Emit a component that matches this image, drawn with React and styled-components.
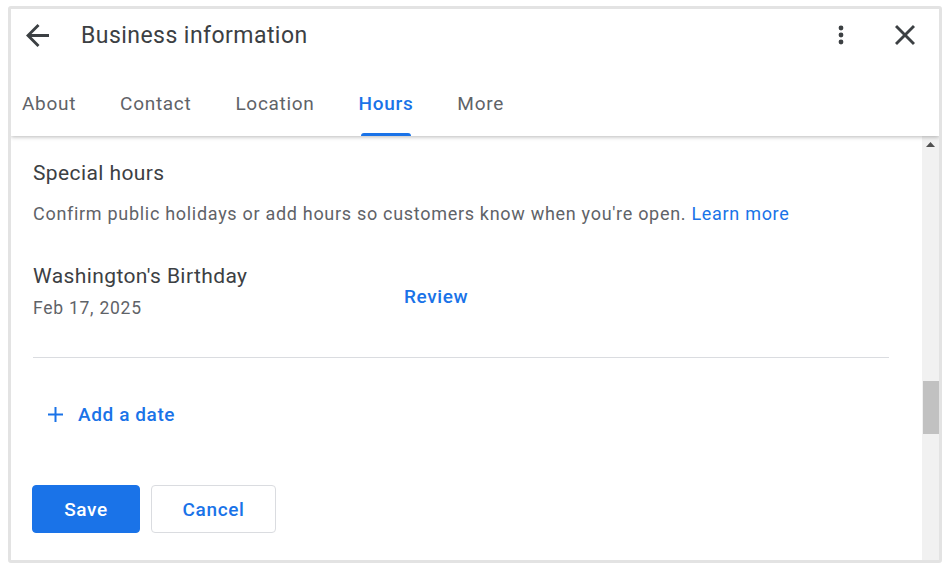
import React from "react";
import styled, { createGlobalStyle } from "styled-components";

const GlobalStyle = createGlobalStyle`
  html, body {
    margin: 0;
    padding: 0;
    background: #ffffff;
  }
  body {
    font-family: Roboto, "Liberation Sans", sans-serif;
  }
  * {
    box-sizing: border-box;
  }
`;

const Page = styled.div`
  padding: 6px 8px 0 8px;
`;

const Frame = styled.div`
  width: 934px;
  height: 557px;
  border: 3px solid #e3e3e3;
  border-radius: 3px;
  display: flex;
  flex-direction: column;
  overflow: hidden;
  background: #fff;
`;

const Header = styled.div`
  height: 127px;
  flex-shrink: 0;
  background: #fff;
  box-shadow: 0 1px 4px rgba(0, 0, 0, 0.28);
  position: relative;
  z-index: 2;
  display: flex;
  flex-direction: column;
`;

const TitleRow = styled.div`
  height: 52px;
  display: flex;
  align-items: center;
  padding: 0 22px 0 14px;
`;

const IconButton = styled.button`
  background: transparent;
  border: 0;
  padding: 0;
  width: ${(p) => p.$w || 24}px;
  height: 24px;
  display: flex;
  align-items: center;
  justify-content: center;
  color: #3c4043;
  cursor: pointer;
`;

const Title = styled.h1`
  margin: 0 0 0 32px;
  font-size: 23px;
  letter-spacing: 0.45px;
  font-weight: 400;
  color: #3c4043;
  flex: 1;
`;

const Actions = styled.div`
  display: flex;
  align-items: center;
  gap: 46px;
`;

const Tabs = styled.div`
  flex: 1;
  display: flex;
  gap: 44px;
  padding-left: 11px;
`;

const Tab = styled.div`
  height: 75px;
  padding-top: 31px;
  font-size: 19px;
  letter-spacing: 0.7px;
  line-height: 24px;
  font-weight: ${(p) => (p.$active ? 500 : 400)};
  color: ${(p) => (p.$active ? "#1a73e8" : "#5f6368")};
  position: relative;
  cursor: pointer;

  &::after {
    content: "";
    display: ${(p) => (p.$active ? "block" : "none")};
    position: absolute;
    left: 2px;
    right: 2px;
    bottom: 0;
    height: 3px;
    border-radius: 3px 3px 0 0;
    background: #1a73e8;
  }
`;

const Body = styled.div`
  flex: 1;
  display: flex;
  min-height: 0;
`;

const Content = styled.div`
  flex: 1;
  padding: 23px 33px 0 22px;
`;

const SectionTitle = styled.h2`
  margin: 0;
  font-size: 21px;
  letter-spacing: 0.4px;
  line-height: 28px;
  font-weight: 400;
  color: #3c4043;
`;

const Description = styled.p`
  margin: 15px 0 0 0;
  font-size: 18px;
  letter-spacing: 0.7px;
  line-height: 24px;
  color: #5f6368;
`;

const Link = styled.a`
  color: #1a73e8;
  text-decoration: none;
`;

const HolidayRow = styled.div`
  margin-top: 36px;
  display: grid;
  grid-template-columns: 371px auto;
  align-items: center;
`;

const HolidayName = styled.div`
  font-size: 21px;
  letter-spacing: 0.4px;
  line-height: 28px;
  color: #3c4043;
`;

const HolidayDate = styled.div`
  margin-top: 6px;
  font-size: 17.5px;
  letter-spacing: 0.75px;
  line-height: 24px;
  color: #5f6368;
`;

const TextButton = styled.button`
  background: transparent;
  border: 0;
  padding: ${(p) => (p.$offset ? "11px 0 0 0" : "0")};
  font-family: Roboto, "Liberation Sans", sans-serif;
  font-size: 19px;
  letter-spacing: 0.6px;
  font-weight: 500;
  color: #1a73e8;
  cursor: pointer;
  display: flex;
  align-items: center;
  gap: 14px;
`;

const Divider = styled.hr`
  margin: 37px 0 0 0;
  border: 0;
  border-top: 1px solid #dadce0;
`;

const AddRow = styled.div`
  margin-top: 44px;
  padding-left: 14px;
  height: 24px;
  display: flex;
  align-items: center;
`;

const ButtonRow = styled.div`
  margin-top: 59px;
  margin-left: -1px;
  display: flex;
  gap: 11px;
`;

const Button = styled.button`
  height: 48px;
  padding: 0;
  border-radius: 4px;
  font-family: Roboto, "Liberation Sans", sans-serif;
  font-size: 19px;
  letter-spacing: 0.6px;
  font-weight: 500;
  cursor: pointer;
  background: ${(p) => (p.$primary ? "#1a73e8" : "#fff")};
  color: ${(p) => (p.$primary ? "#fff" : "#1a73e8")};
  border: 1px solid ${(p) => (p.$primary ? "#1a73e8" : "#dadce0")};
  width: ${(p) => (p.$primary ? 108 : 125)}px;
`;

const ScrollTrack = styled.div`
  width: 17px;
  flex-shrink: 0;
  background: #f1f1f1;
  display: flex;
  flex-direction: column;
  align-items: center;
`;

const ScrollArrow = styled.div`
  height: 17px;
  width: 17px;
  display: flex;
  align-items: center;
  justify-content: center;
`;

const ScrollThumb = styled.div`
  margin-top: 228px;
  width: 16px;
  margin-left: 1px;
  height: 53px;
  background: #c1c1c1;
`;

const ArrowBack = () => (
  <svg width="23" height="23" viewBox="4 4 16 16" fill="currentColor">
    <path d="M20 11H7.83l5.59-5.59L12 4l-8 8 8 8 1.41-1.41L7.83 13H20v-2z" />
  </svg>
);

const MoreVert = () => (
  <svg width="6" height="20" viewBox="0 0 6 20" fill="currentColor">
    <circle cx="3" cy="3" r="2.4" />
    <circle cx="3" cy="10" r="2.4" />
    <circle cx="3" cy="17" r="2.4" />
  </svg>
);

const Close = () => (
  <svg width="20" height="20" viewBox="5 5 14 14" fill="currentColor">
    <path d="M19 6.41L17.590 5 12 10.59 6.41 5 5 6.41 10.59 12 5 17.59 6.41 19 12 13.41 17.59 19 19 17.59 13.41 12z" />
  </svg>
);

const Plus = () => (
  <svg width="17" height="17" viewBox="0 0 17 17">
    <path d="M8.5 1v15M1 8.5h15" stroke="#1a73e8" strokeWidth="2" />
  </svg>
);

const UpTriangle = () => (
  <svg width="9" height="5" viewBox="0 0 9 5">
    <path d="M0 5L4.5 0L9 5z" fill="#505050" />
  </svg>
);

const tabs = ["About", "Contact", "Location", "Hours", "More"];

export default function App() {
  const [active, setActive] = React.useState("Hours");

  return (
    <>
      <GlobalStyle />
      <Page>
        <Frame>
          <Header>
            <TitleRow>
              <IconButton $w={24}>
                <ArrowBack />
              </IconButton>
              <Title>Business information</Title>
              <Actions>
                <IconButton $w={12}>
                  <MoreVert />
                </IconButton>
                <IconButton $w={24}>
                  <Close />
                </IconButton>
              </Actions>
            </TitleRow>
            <Tabs>
              {tabs.map((t) => (
                <Tab key={t} $active={t === active} onClick={() => setActive(t)}>
                  {t}
                </Tab>
              ))}
            </Tabs>
          </Header>
          <Body>
            <Content>
              <SectionTitle>Special hours</SectionTitle>
              <Description>
                Confirm public holidays or add hours so customers know when you're open.{" "}
                <Link href="#">Learn more</Link>
              </Description>
              <HolidayRow>
                <div>
                  <HolidayName>Washington's Birthday</HolidayName>
                  <HolidayDate>Feb 17, 2025</HolidayDate>
                </div>
                <TextButton $offset>Review</TextButton>
              </HolidayRow>
              <Divider />
              <AddRow>
                <TextButton>
                  <Plus />
                  Add a date
                </TextButton>
              </AddRow>
              <ButtonRow>
                <Button $primary>Save</Button>
                <Button>Cancel</Button>
              </ButtonRow>
            </Content>
            <ScrollTrack>
              <ScrollArrow>
                <UpTriangle />
              </ScrollArrow>
              <ScrollThumb />
            </ScrollTrack>
          </Body>
        </Frame>
      </Page>
    </>
  );
}
